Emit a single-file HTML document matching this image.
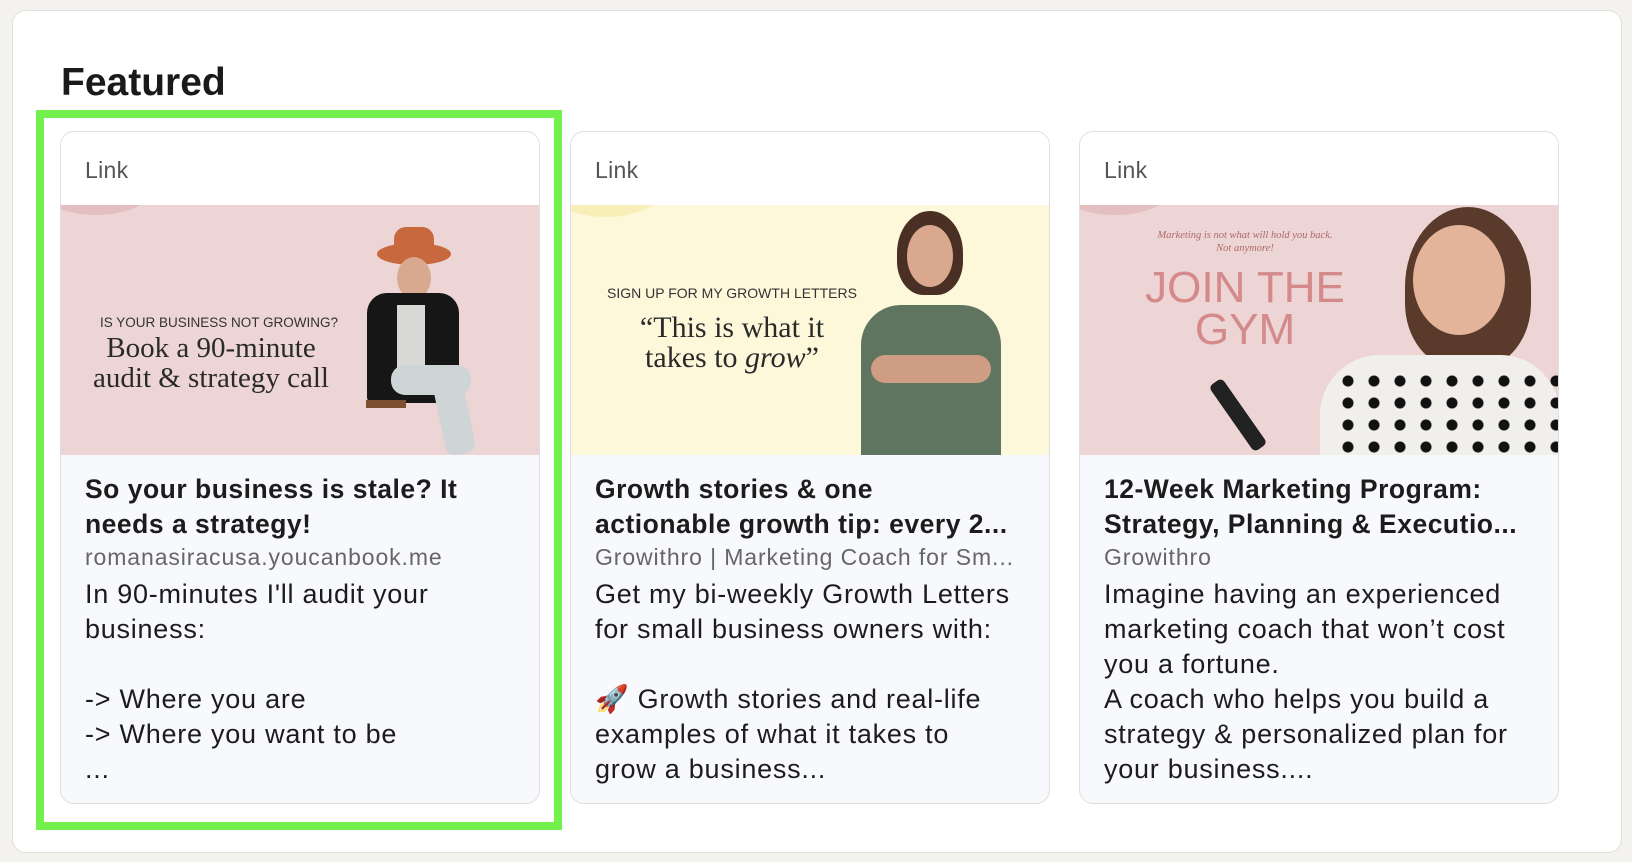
<!DOCTYPE html>
<html><head><meta charset="utf-8"><style>
*{margin:0;padding:0;box-sizing:border-box}
body{width:1632px;height:862px;background:#f3f2ef;font-family:"Liberation Sans",sans-serif;position:relative;overflow:hidden}
.panel{position:absolute;left:12px;top:10px;width:1610px;height:843px;background:#fff;border:1px solid #e2e0dc;border-radius:14px}
h1{position:absolute;left:61px;top:61px;font-size:39px;font-weight:bold;color:#1a1a1a;letter-spacing:0}
.green{position:absolute;left:36px;top:110px;width:526px;height:720px;border:8px solid #72f04c}
.card{position:absolute;top:131px;width:480px;height:673px;border:1px solid #dedede;border-radius:14px;overflow:hidden;background:#f8f9fc}
.hd{height:73px;background:#fff;font-size:23px;color:#555;padding:25px 0 0 24px;letter-spacing:0.3px}
.img{position:relative;height:250px;overflow:hidden}
.bd{padding:0 0 0 24px;color:#1c1c1c}
.t{font-size:26.5px;font-weight:bold;line-height:35px;margin-top:17px;white-space:nowrap;letter-spacing:0.5px}
.s{font-size:23px;color:#666;line-height:30px;white-space:nowrap;letter-spacing:0.9px}
.b{font-size:27px;line-height:35px;margin-top:5px;white-space:nowrap;letter-spacing:0.75px}
.ab{position:absolute}
.serif{font-family:"Liberation Serif",serif}
</style></head><body>
<div class="panel"></div>
<h1>Featured</h1>

<div class="card" style="left:60px">
 <div class="hd">Link</div>
 <div class="img" style="background:#ecd5d4">
  <div class="ab" style="left:-20px;top:-40px;width:110px;height:50px;border-radius:50%;background:#e3bfc0"></div>
  <div class="ab" style="left:33px;top:110px;width:300px;text-align:center;font-size:13.5px;color:#333;transform:translateX(-25px)">IS YOUR BUSINESS NOT GROWING?</div>
  <div class="ab serif" style="left:0;top:128px;width:300px;text-align:center;font-size:29px;line-height:30px;color:#2a2a2a">Book a 90-minute<br>audit &amp; strategy call</div>
  <div class="ab" style="left:316px;top:38px;width:74px;height:22px;border-radius:50%;background:#c8683f"></div>
  <div class="ab" style="left:333px;top:22px;width:40px;height:28px;border-radius:12px 12px 4px 4px;background:#c8683f"></div>
  <div class="ab" style="left:336px;top:52px;width:34px;height:42px;border-radius:50%;background:#d9a98f"></div>
  <div class="ab" style="left:306px;top:88px;width:92px;height:110px;border-radius:20px 20px 6px 6px;background:#161616"></div>
  <div class="ab" style="left:336px;top:100px;width:28px;height:70px;background:#d8d8d6"></div>
  <div class="ab" style="left:330px;top:160px;width:80px;height:30px;border-radius:14px;background:#cfd4d6"></div>
  <div class="ab" style="left:378px;top:170px;width:30px;height:80px;border-radius:10px;background:#cfd4d6;transform:rotate(-12deg)"></div>
  <div class="ab" style="left:305px;top:195px;width:40px;height:8px;background:#7a5030"></div>
 </div>
 <div class="bd">
  <div class="t">So your business is stale? It<br>needs a strategy!</div>
  <div class="s">romanasiracusa.youcanbook.me</div>
  <div class="b">In 90-minutes I'll audit your<br>business:<br><br>-&gt; Where you are<br>-&gt; Where you want to be<br>...</div>
 </div>
</div>
<div class="green"></div>

<div class="card" style="left:570px">
 <div class="hd">Link</div>
 <div class="img" style="background:#fdf8da">
  <div class="ab" style="left:-20px;top:-40px;width:110px;height:52px;border-radius:50%;background:#f8eeb8"></div>
  <div class="ab" style="left:11px;top:80px;width:300px;text-align:center;font-size:14px;color:#333">SIGN UP FOR MY GROWTH LETTERS</div>
  <div class="ab serif" style="left:11px;top:108px;width:300px;text-align:center;font-size:30px;line-height:30px;color:#2a2a2a">“This is what it<br>takes to <i>grow</i>”</div>
  <div class="ab" style="left:326px;top:6px;width:66px;height:84px;border-radius:50% 50% 40% 40%;background:#4a3024"></div>
  <div class="ab" style="left:336px;top:20px;width:46px;height:62px;border-radius:50%;background:#d9a88e"></div>
  <div class="ab" style="left:290px;top:100px;width:140px;height:160px;border-radius:40px 40px 0 0;background:#5f7560"></div>
  <div class="ab" style="left:300px;top:150px;width:120px;height:28px;border-radius:14px;background:#cf9c84"></div>
 </div>
 <div class="bd">
  <div class="t">Growth stories &amp; one<br>actionable growth tip: every 2...</div>
  <div class="s">Growithro | Marketing Coach for Sm...</div>
  <div class="b">Get my bi-weekly Growth Letters<br>for small business owners with:<br><br>🚀 Growth stories and real-life<br>examples of what it takes to<br>grow a business...</div>
 </div>
</div>

<div class="card" style="left:1079px">
 <div class="hd">Link</div>
 <div class="img" style="background:#ecd5d4">
  <div class="ab" style="left:-20px;top:-40px;width:110px;height:50px;border-radius:50%;background:#e3bfc0"></div>
  <div class="ab serif" style="left:15px;top:24px;width:300px;text-align:center;font-size:10.5px;line-height:13px;color:#b06a6a;font-style:italic">Marketing is not what will hold you back.<br>Not anymore!</div>
  <div class="ab" style="left:15px;top:62px;width:300px;text-align:center;font-size:44px;line-height:42px;color:#d48a8a">JOIN THE<br>GYM</div>
  <div class="ab" style="left:325px;top:2px;width:126px;height:160px;border-radius:50% 50% 40% 40%;background:#5a3a2a"></div>
  <div class="ab" style="left:333px;top:20px;width:92px;height:110px;border-radius:50%;background:#e4b49a"></div>
  <div class="ab" style="left:240px;top:150px;width:240px;height:120px;border-radius:60px 60px 0 0;background:#f1efec"></div>
  <div class="ab" style="left:150px;top:170px;width:16px;height:80px;border-radius:5px;background:#222;transform:rotate(-35deg)"></div>
  <div class="ab" style="left:255px;top:165px;width:230px;height:90px;background:radial-gradient(circle,#111 5px,transparent 6px) 0 0/26px 22px"></div>
 </div>
 <div class="bd">
  <div class="t">12-Week Marketing Program:<br>Strategy, Planning &amp; Executio...</div>
  <div class="s">Growithro</div>
  <div class="b">Imagine having an experienced<br>marketing coach that won’t cost<br>you a fortune.<br>A coach who helps you build a<br>strategy &amp; personalized plan for<br>your business....</div>
 </div>
</div>
</body></html>
